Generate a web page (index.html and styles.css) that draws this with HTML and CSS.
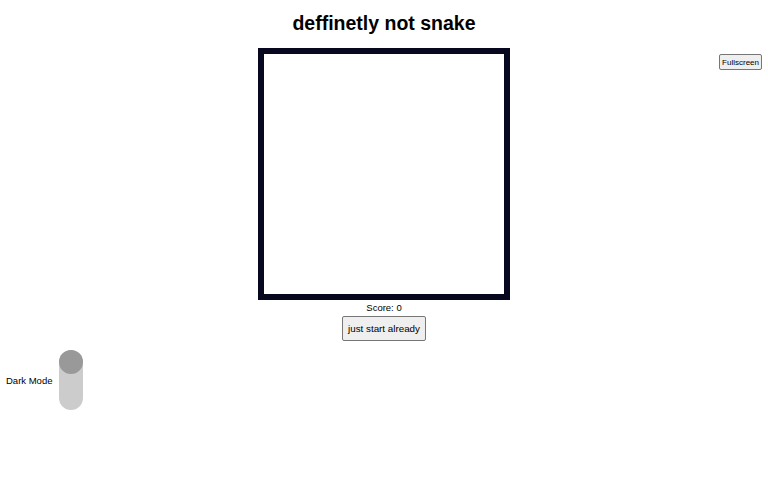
FILE: index.html
```html
<!DOCTYPE html>
<html lang="en">
<head>
    <meta charset="UTF-8">
    <title>deffinetly not snake</title>
    <meta name="viewport" content="width=device-width, initial-scale=1.0">
    <link rel="stylesheet" href="styles.css">
</head>
<body>
    <h1>deffinetly not snake</h1>
    <button class="fullscreen">Fullscreen</button>
    <div class="board"></div>
    <div class="score">Score: 0</div>
    <button class="start">just start already</button>
    <div class="dark-row">
        <label for="dark">Dark Mode</label>
        <div class="toggle" id="dark">
            <span class="knob"></span>
        </div>
    </div>
</body>
</html>
```

FILE: styles.css
```css
body {
    font-family: 'Liberation Sans', Arial, sans-serif;
    background-color: #fff;
    color: #000;
    margin: 0;
    text-align: center;
}
h1 {
    font-size: 19.5px;
    line-height: 23px;
    margin: 12px 0 13px;
}
.fullscreen {
    position: absolute;
    top: 54px;
    right: 6px;
    font-family: inherit;
    font-size: 8px;
    color: #000;
    height: 16px;
    padding: 0 2px;
    background-color: #efefef;
    border: 1px solid #767676;
    border-radius: 2px;
}
.board {
    width: 240px;
    height: 240px;
    margin: 0 auto;
    border: 6px solid #07071f;
    background-color: #fff;
}
.score {
    font-size: 9.5px;
    line-height: 12px;
    margin-top: 2px;
}
.start {
    font-family: inherit;
    font-size: 9.8px;
    color: #000;
    height: 25px;
    width: 84px;
    padding: 0;
    margin-top: 2px;
    background-color: #efefef;
    border: 1px solid #767676;
    border-radius: 2px;
}
.dark-row {
    display: flex;
    align-items: center;
    gap: 7px;
    margin: 9px 0 0 6px;
}
.dark-row label {
    font-size: 9.5px;
}
.toggle {
    width: 24px;
    height: 60px;
    border-radius: 12px;
    background-color: #ccc;
}
.knob {
    display: block;
    width: 24px;
    height: 24px;
    border-radius: 50%;
    background-color: #999;
}
```
